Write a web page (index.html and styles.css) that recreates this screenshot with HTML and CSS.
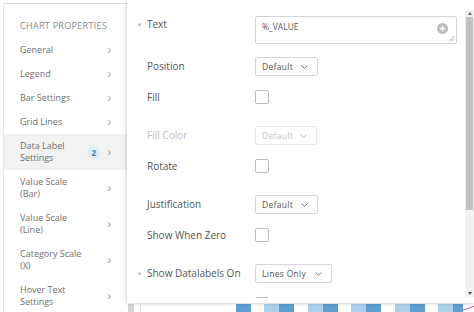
FILE: index.html
```html
<!DOCTYPE html>
<html>
<head>
<meta charset="utf-8">
<link rel="stylesheet" href="styles.css">
</head>
<body>
<div class="app">
  <aside class="sidebar">
    <div class="side-head">CHART PROPERTIES</div>
    <ul class="side-list">
      <li class="side-item"><span class="side-text">General</span><span class="arrow">&#8250;</span></li>
      <li class="side-item"><span class="side-text">Legend</span><span class="arrow">&#8250;</span></li>
      <li class="side-item"><span class="side-text">Bar Settings</span><span class="arrow">&#8250;</span></li>
      <li class="side-item"><span class="side-text">Grid Lines</span><span class="arrow">&#8250;</span></li>
      <li class="side-item active"><span class="side-text">Data Label<br>Settings</span><span class="badge">2</span><span class="arrow">&#8250;</span></li>
      <li class="side-item"><span class="side-text">Value Scale<br>(Bar)</span><span class="arrow">&#8250;</span></li>
      <li class="side-item"><span class="side-text">Value Scale<br>(Line)</span><span class="arrow">&#8250;</span></li>
      <li class="side-item"><span class="side-text">Category Scale<br>(X)</span><span class="arrow">&#8250;</span></li>
      <li class="side-item"><span class="side-text">Hover Text<br>Settings</span><span class="arrow">&#8250;</span></li>
    </ul>
  </aside>
  <div class="right">
    <section class="panel">
      <div class="form">
        <div class="row row-text">
          <div class="label dot">Text</div>
          <div class="textarea">
            <span class="ta-value">%_VALUE</span>
            <span class="plus"><svg width="11" height="11" viewBox="0 0 11 11"><circle cx="5.5" cy="5.5" r="5.5" fill="#bdbdbd"/><path d="M5.5 2.8v5.4M2.8 5.5h5.4" stroke="#fff" stroke-width="1.4"/></svg></span>
            <span class="grip"><svg width="7" height="7" viewBox="0 0 7 7"><path d="M6.5 1L1 6.5M6.5 4L4 6.5" stroke="#999" stroke-width="0.8"/></svg></span>
          </div>
        </div>
        <div class="row row-select">
          <div class="label">Position</div>
          <div class="select w63"><span>Default</span><svg class="chev" width="7" height="4" viewBox="0 0 7 4"><path d="M0.5 0.5L3.5 3.3L6.5 0.5" fill="none" stroke="#777" stroke-width="1"/></svg></div>
        </div>
        <div class="row row-check">
          <div class="label">Fill</div>
          <div class="check"></div>
        </div>
        <div class="row row-select">
          <div class="label disabled">Fill Color</div>
          <div class="select w62 disabled"><span>Default</span><svg class="chev" width="7" height="4" viewBox="0 0 7 4"><path d="M0.5 0.5L3.5 3.3L6.5 0.5" fill="none" stroke="#bbb" stroke-width="1"/></svg></div>
        </div>
        <div class="row row-check">
          <div class="label">Rotate</div>
          <div class="check"></div>
        </div>
        <div class="row row-select">
          <div class="label">Justification</div>
          <div class="select w63"><span>Default</span><svg class="chev" width="7" height="4" viewBox="0 0 7 4"><path d="M0.5 0.5L3.5 3.3L6.5 0.5" fill="none" stroke="#777" stroke-width="1"/></svg></div>
        </div>
        <div class="row row-check">
          <div class="label">Show When Zero</div>
          <div class="check"></div>
        </div>
        <div class="row row-select">
          <div class="label dot">Show Datalabels On</div>
          <div class="select w77"><span>Lines Only</span><svg class="chev" width="7" height="4" viewBox="0 0 7 4"><path d="M0.5 0.5L3.5 3.3L6.5 0.5" fill="none" stroke="#777" stroke-width="1"/></svg></div>
        </div>
        <div class="row row-check">
          <div class="label"></div>
          <div class="check"></div>
        </div>
      </div>
      <div class="scrollbar">
        <div class="sb-arrow up"></div>
        <div class="sb-thumb"></div>
        <div class="sb-track"></div>
        <div class="sb-arrow down"></div>
      </div>
    </section>
    <div class="chart-strip">
      <div class="strip-square"></div>
      <div class="strip-line"></div>
      <div class="bars">
        <div class="group"><div class="bar dark"></div></div>
        <div class="group"><div class="bar light"></div><div class="bar dark"></div></div>
        <div class="group"><div class="bar light"></div><div class="bar dark"></div></div>
        <div class="group"><div class="bar light"></div><div class="bar dark"></div></div>
        <div class="group"><div class="bar light"></div><div class="bar dark"></div></div>
        <div class="group"><div class="bar light"></div><div class="bar dark short"></div></div>
      </div>
      <div class="pink"></div>
    </div>
  </div>
</div>
</body>
</html>
```

FILE: styles.css
```css
* { box-sizing: border-box; }
html, body { margin: 0; padding: 0; background: #fff; }
body {
  width: 474px;
  height: 312px;
  overflow: hidden;
  font-family: "Open Sans", "Liberation Sans", sans-serif;
  color: #555;
}
.app {
  display: flex;
  height: 312px;
}
.sidebar {
  flex: none;
  width: 124px;
  margin: 3px 0 0 3px;
  border-top: 1px solid #dcdcdc;
  border-left: 1px solid #e6e6e6;
  background: #fff;
}
.side-head {
  height: 34px;
  padding: 16px 0 0 16px;
  font-size: 9px;
  line-height: 12px;
  letter-spacing: 0.3px;
  color: #8a8a8a;
}
.side-list {
  list-style: none;
  margin: 0;
  padding: 0;
}
.side-item {
  display: flex;
  align-items: center;
  padding: 6px 16px 6px 16px;
  font-size: 9px;
  line-height: 12px;
  color: #707070;
}
.side-item.active {
  background: #f2f2f2;
}
.side-text { flex: 1; }
.arrow {
  font-size: 12px;
  line-height: 12px;
  color: #a0a0a0;
}
.badge {
  width: 13px;
  height: 13px;
  margin-right: 7px;
  border-radius: 50%;
  background: #dcedf8;
  color: #3d7fae;
  font-size: 8px;
  font-weight: 700;
  line-height: 13px;
  text-align: center;
}
.right {
  flex: 1;
  display: flex;
  flex-direction: column;
  min-width: 0;
}
.panel {
  position: relative;
  z-index: 1;
  height: 303px;
  flex: none;
  display: flex;
  background: #fff;
  box-shadow: 0 0 4px rgba(0, 0, 0, 0.28);
}
.form {
  flex: 1;
  height: 298px;
  overflow: hidden;
  padding: 16px 8px 0 20px;
}
.row {
  display: flex;
  align-items: flex-start;
}
.row-text { height: 41px; }
.row-select { height: 33px; }
.row-check { height: 36px; }
.label {
  width: 108px;
  flex: none;
  font-size: 10px;
  color: #555;
  display: flex;
  align-items: center;
}
.row-text .label { line-height: 16px; }
.row-select .label { line-height: 19px; }
.row-check .label { line-height: 15px; }
.label.disabled { color: #bdbdbd; }
.label.dot::before {
  content: "";
  width: 3px;
  height: 3px;
  border-radius: 50%;
  background: #a9c3d6;
  margin-left: -9px;
  margin-right: 6px;
}
.textarea {
  flex: 1;
  height: 28px;
  border: 1px solid #d4d4d4;
  border-radius: 2px;
  display: flex;
  align-items: flex-start;
  padding: 4px 0 0 6px;
  position: relative;
}
.ta-value {
  flex: 1;
  font-size: 8.5px;
  line-height: 12px;
  color: #555;
}
.plus {
  margin: 2px 8px 0 0;
  display: flex;
}
.grip {
  position: absolute;
  right: 1px;
  bottom: 1px;
  display: flex;
}
.select {
  height: 19px;
  border: 1px solid #d6d6d6;
  border-radius: 2px;
  display: flex;
  align-items: center;
  justify-content: space-between;
  padding: 0 9px 0 6px;
  font-size: 8.5px;
  letter-spacing: 0.3px;
  color: #555;
}
.select.disabled {
  border-color: #e8e8e8;
  color: #c4c4c4;
}
.w63 { width: 63px; }
.w62 { width: 62px; }
.w77 { width: 77px; }
.chev { display: block; }
.check {
  width: 14px;
  height: 14px;
  border: 1px solid #bdbdbd;
  border-radius: 2px;
  background: #fff;
}
.scrollbar {
  flex: none;
  width: 9px;
  margin-top: 10px;
  height: 287px;
  display: flex;
  flex-direction: column;
  background: #f1f1f1;
}
.sb-arrow {
  height: 7px;
  display: flex;
  justify-content: center;
  align-items: center;
}
.sb-arrow::after {
  content: "";
  border-left: 2.5px solid transparent;
  border-right: 2.5px solid transparent;
}
.sb-arrow.up::after { border-bottom: 3px solid #666; }
.sb-arrow.down::after { border-top: 3px solid #555; }
.sb-thumb {
  height: 193px;
  margin: 0 1px;
  background: #c1c1c1;
}
.sb-track { flex: 1; }
.chart-strip {
  flex: 1;
  display: flex;
  align-items: stretch;
  padding-top: 1px;
}
.strip-square {
  width: 6px;
  margin-left: 1px;
  background: #d6d6d6;
}
.strip-line {
  width: 1px;
  margin-left: 6px;
  background: #e2e2e2;
}
.bars {
  display: flex;
  gap: 13.5px;
  margin-left: 95px;
}
.group { display: flex; }
.bar { width: 15px; }
.bar.short { width: 10px; }
.bar.dark { background: #5e9fd2; }
.bar.light { background: #acd0ec; }
.pink {
  width: 11px;
  background: linear-gradient(160deg, transparent 45%, #d8498a 50%, transparent 60%);
}
```
